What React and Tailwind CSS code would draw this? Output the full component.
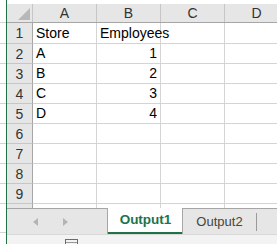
import React from "react";

const font = { fontFamily: '"Liberation Sans", Arial, sans-serif' };

const data = [
  ["Store", "Employees"],
  ["A", 1],
  ["B", 2],
  ["C", 3],
  ["D", 4],
  ["", ""],
  ["", ""],
  ["", ""],
  ["", ""],
];

function Cell({ value, wide }) {
  const isNum = typeof value === "number";
  return (
    <div
      className={`w-[64px] shrink-0 h-full border-r border-b border-[#d4d4d4] flex items-end pb-[1px] px-[3px] text-[14px] text-black leading-none ${
        isNum ? "justify-end" : "justify-start"
      } ${wide ? "overflow-visible whitespace-nowrap" : "overflow-hidden"}`}
    >
      <span className="pb-[2px]">{value}</span>
    </div>
  );
}

export default function App() {
  return (
    <div className="w-[277px] h-[244px] overflow-hidden bg-white flex" style={font}>
      {/* left strip */}
      <div className="w-[6px] shrink-0 flex flex-col">
        <div className="h-[4px] shrink-0" />
        <div className="h-[19px] shrink-0 border-b border-[#d4d4d4]" />
        <div className="h-[21px] shrink-0 border-b border-[#d4d4d4]" />
        {[2, 3, 4, 5, 6, 7, 8, 9].map((r) => (
          <div key={r} className="h-[20px] shrink-0 border-b border-[#d4d4d4]" />
        ))}
        <div className="h-[29px] shrink-0 border-b border-[#d4d4d4]" />
      </div>
      {/* green line */}
      <div className="w-[1px] shrink-0 bg-[#217346]" />
      {/* main */}
      <div className="flex-1 min-w-0 flex flex-col">
        <div className="h-[4px] shrink-0" />
        {/* column header */}
        <div className="h-[19px] shrink-0 flex bg-[#e6e6e6] border-b border-[#a6a6a6]">
          <div className="w-[26px] shrink-0 h-full border-r border-[#c6c6c6] relative">
            <svg className="absolute right-[2px] bottom-[2px]" width="12" height="12" viewBox="0 0 12 12">
              <polygon points="12,0 12,12 0,12" fill="#b8b8b8" />
            </svg>
          </div>
          {["A", "B", "C", "D"].map((c) => (
            <div
              key={c}
              className="w-[64px] shrink-0 h-full border-r border-[#c6c6c6] flex items-center justify-center text-[14px] text-[#333] leading-none"
            >
              {c}
            </div>
          ))}
        </div>
        {/* rows */}
        {data.map((row, i) => (
          <div key={i} className={`${i === 0 ? "h-[21px]" : "h-[20px]"} shrink-0 flex`}>
            <div className="w-[26px] shrink-0 h-full bg-[#e6e6e6] border-r border-[#a6a6a6] border-b border-b-[#c6c6c6] flex items-center justify-center text-[14px] text-[#333] leading-none">
              {i + 1}
            </div>
            <Cell value={row[0]} />
            <Cell value={row[1]} wide={i === 0} />
            <Cell value="" />
            <Cell value="" />
          </div>
        ))}
        {/* partial row 10 */}
        <div className="h-[4px] shrink-0 flex">
          <div className="w-[26px] shrink-0 h-full bg-[#e6e6e6] border-r border-[#a6a6a6]" />
          {[0, 1, 2, 3].map((k) => (
            <div key={k} className="w-[64px] shrink-0 h-full border-r border-[#d4d4d4]" />
          ))}
        </div>
        {/* tab bar */}
        <div className="h-[26px] shrink-0 flex bg-[#e6e6e6]">
          <div className="w-[100px] shrink-0 h-full border-t border-[#a6a6a6] flex items-center">
            <svg className="ml-[26px]" width="5" height="8" viewBox="0 0 5 8">
              <polygon points="5,0 5,8 0,4" fill="#b4b4b4" />
            </svg>
            <svg className="ml-[25px]" width="5" height="8" viewBox="0 0 5 8">
              <polygon points="0,0 0,8 5,4" fill="#b4b4b4" />
            </svg>
          </div>
          <div className="w-[76px] shrink-0 h-full bg-white border-l border-r border-[#a6a6a6] flex flex-col">
            <div className="flex-1 flex items-center justify-center text-[13.5px] font-bold text-[#217346] leading-none pl-[1px]">
              Output1
            </div>
            <div className="h-[2px] bg-[#217346]" />
          </div>
          <div className="w-[74px] shrink-0 h-full border-t border-[#a6a6a6] flex items-center">
            <div className="flex-1 flex items-center justify-center text-[13px] text-[#444] leading-none">
              Output2
            </div>
            <div className="w-[1px] h-[18px] bg-[#9a9a9a]" />
          </div>
          <div className="flex-1 h-full border-t border-[#a6a6a6]" />
        </div>
        {/* bottom strip */}
        <div className="flex-1 bg-[#f3f3f3] border-t border-[#d8d8d8] flex items-end">
          <div className="ml-[58px] w-[13px] h-[5px] border-t border-l border-r border-[#6b6b6b] flex flex-col">
            <div className="mt-[2px] h-[1px] bg-[#9a9a9a]" />
          </div>
        </div>
      </div>
    </div>
  );
}
